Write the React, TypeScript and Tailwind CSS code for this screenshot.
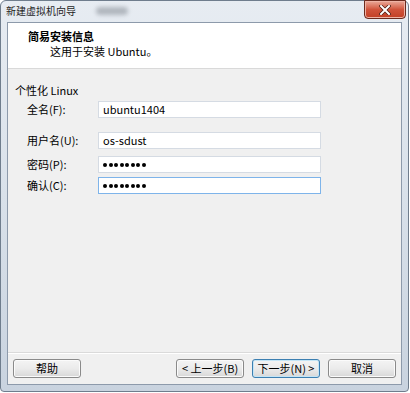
import React from "react";

const font = { fontFamily: '"Microsoft YaHei", "Noto Sans CJK SC", "Noto Sans", sans-serif' };

function Field({ label, value, password, focused, className }: { label: string; value: string; password?: boolean; focused?: boolean; className?: string }) {
  return (
    <div className={`flex items-center h-[17px] ${className ?? ""}`}>
      <span className="w-[90px] pl-[19px] text-[11px] leading-none text-black">{label}</span>
      <div
        className={`w-[223px] h-[17px] bg-white flex items-center pl-[4px] border ${
          focused ? "border-[#7eb4ea]" : "border-[#d5dbe3]"
        }`}
      >
        {password ? (
          <span className="flex gap-[1.5px]">
            {Array.from({ length: 8 }).map((_, i) => (
              <span key={i} className="w-[4px] h-[4px] rounded-full bg-black" />
            ))}
          </span>
        ) : (
          <span className="text-[11px] leading-none text-black">{value}</span>
        )}
      </div>
    </div>
  );
}

function Btn({ children, primary, className }: { children: React.ReactNode; primary?: boolean; className?: string }) {
  return (
    <div
      className={`w-[68px] h-[19px] rounded-[3px] border flex items-center justify-center text-[11px] leading-none text-black bg-gradient-to-b from-[#f4f4f4] via-[#ebebeb] to-[#d8d8d8] ${
        primary ? "border-[#3c7fb1] shadow-[inset_0_0_0_1px_#c4e5f6]" : "border-[#8a8a8a] shadow-[inset_0_0_0_1px_#fbfbfb]"
      } ${className ?? ""}`}
    >
      {children}
    </div>
  );
}

export default function App() {
  return (
    <div style={font} className="w-[410px] h-[393px] bg-white overflow-hidden">
      <div className="w-[409px] h-[392px] rounded-t-[6px] rounded-b-[4px] border border-[#6f7d8d] bg-gradient-to-b from-[#e7ecf2] via-[#d9e1ea] to-[#c9d3df] flex flex-col">
        {/* title bar */}
        <div className="h-[21px] flex items-start relative">
          <span className="pl-[5px] pt-[5px] text-[10px] leading-none text-[#1e1e1e]">新建虚拟机向导</span>
          <span className="ml-[20px] mt-[6px] w-[32px] h-[8px] rounded-full bg-[#9aa0a8] blur-[2px] opacity-70" />
          <div className="absolute right-[2px] top-[-1px] w-[42px] h-[19px] rounded-b-[4px] border border-[#6b2a1e] bg-gradient-to-b from-[#e9a99a] via-[#d0533b] to-[#c23f24] shadow-[inset_0_0_0_1px_#eeb3a5] flex items-center justify-center">
            <svg width="12" height="10" viewBox="0 0 12 10">
              <path d="M2 1 L10 9 M10 1 L2 9" stroke="#4a1a10" strokeWidth="3.4" strokeLinecap="square" />
              <path d="M2 1 L10 9 M10 1 L2 9" stroke="#ffffff" strokeWidth="2" strokeLinecap="square" />
            </svg>
          </div>
        </div>

        {/* client area */}
        <div className="mx-[6px] flex-1 mb-[6px] border border-[#8d9aab] flex flex-col bg-[#f0f0f0]">
          <div className="h-[46px] bg-white border-b border-[#d9d9d9] flex flex-col">
            <span className="pl-[20px] pt-[8px] text-[11px] leading-none font-bold text-black">简易安装信息</span>
            <span className="pl-[42px] pt-[4px] text-[11px] leading-none text-black">这用于安装 Ubuntu。</span>
          </div>

          <div className="flex-1 flex flex-col">
            <span className="pl-[7px] pt-[16px] text-[11px] leading-none text-black">个性化 Linux</span>
            <Field className="mt-[5px]" label="全名(F):" value="ubuntu1404" />
            <Field className="mt-[14px]" label="用户名(U):" value="os-sdust" />
            <Field className="mt-[7px]" label="密码(P):" value="" password />
            <Field className="mt-[4px]" label="确认(C):" value="" password focused />
          </div>

          <div className="h-[32px] border-t border-[#dadada] shadow-[inset_0_1px_0_#ffffff] flex items-center px-[5px]">
            <Btn>帮助</Btn>
            <div className="flex-1" />
            <Btn>&lt; 上一步(B)</Btn>
            <Btn primary className="ml-[8px]">下一步(N) &gt;</Btn>
            <Btn className="ml-[8px]">取消</Btn>
          </div>
        </div>
      </div>
    </div>
  );
}
